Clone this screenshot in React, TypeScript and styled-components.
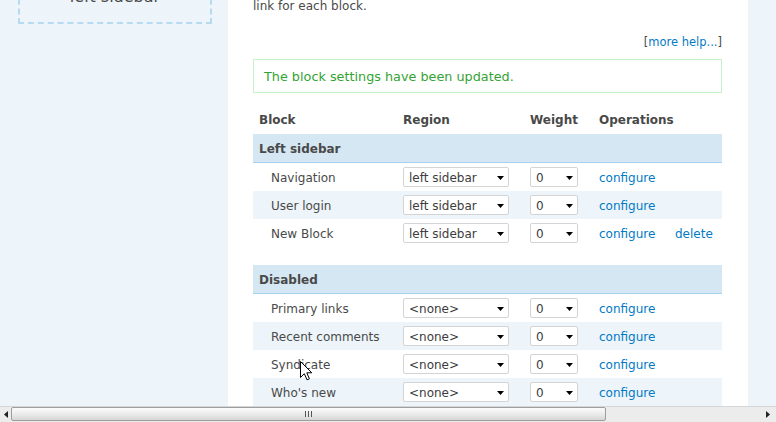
import styled, { createGlobalStyle } from 'styled-components';

const GlobalStyle = createGlobalStyle`
  html, body {
    margin: 0;
    padding: 0;
  }
  body {
    background: #edf5fa;
    font-family: "DejaVu Sans", Verdana, sans-serif;
    font-size: 12px;
    color: #494949;
  }
`;

const Frame = styled.div`
  width: 776px;
  height: 422px;
  display: flex;
  flex-direction: column;
  overflow: hidden;
`;

const Viewport = styled.div`
  position: relative;
  flex: 1;
  display: flex;
  overflow: hidden;
`;

const Sidebar = styled.aside`
  width: 228px;
  flex: none;
  padding: 0 16px 0 18px;
  box-sizing: border-box;
`;

// region placeholder, scrolled mostly out of view
const RegionBox = styled.div`
  margin-top: -30px;
  height: 54px;
  box-sizing: border-box;
  border: 2px dashed #b6daf0;
  padding-top: 15px;
  text-align: center;
  font-size: 16px;
  line-height: 20px;
  color: #494949;
`;

const Main = styled.main`
  width: 520px;
  flex: none;
  background: #fff;
  padding: 0 26px 0 25px;
  box-sizing: border-box;
`;

const Gutter = styled.div`
  flex: 1;
`;

const Intro = styled.p`
  margin: -3px 0 0;
  line-height: 18px;
`;

const MoreHelp = styled.div`
  margin-top: 19px;
  text-align: right;
  font-size: 11.5px;
  line-height: 16px;
`;

const Link = styled.a`
  color: #027ac6;
  text-decoration: none;
`;

const Message = styled.div`
  margin-top: 9px;
  border: 1px solid #c7f2c8;
  color: #33a333;
  padding: 9px 10px 7px;
  font-size: 12.8px;
  line-height: 16px;
`;

const Table = styled.div`
  margin-top: 12px;
`;

const Row = styled.div<{ $shade?: boolean }>`
  display: grid;
  grid-template-columns: 144px 127px 69px 76px 53px;
  align-items: center;
  height: 28px;
  background: ${(p) => (p.$shade ? '#edf5fa' : '#fff')};
`;

const HeadRow = styled(Row)`
  height: 29px;
  font-weight: bold;
`;

const HeadCell = styled.div<{ $span?: number }>`
  padding-left: 6px;
  white-space: nowrap;
  ${(p) => (p.$span ? `grid-column: span ${p.$span};` : '')}
`;

const Cell = styled.div<{ $indent?: boolean }>`
  padding: 2px 0 0 ${(p) => (p.$indent ? 18 : 6)}px;
  white-space: nowrap;
`;

const SelectCell = styled.div`
  padding-left: 6px;
`;

const Band = styled.div`
  height: 29px;
  box-sizing: border-box;
  display: flex;
  align-items: center;
  padding: 2px 0 0 6px;
  background: #d4e7f3;
  border-bottom: 1px solid #a9d2ef;
  font-weight: bold;
`;

const SectionGap = styled.div`
  height: 18px;
`;

const SelectBox = styled.div<{ $width: number }>`
  width: ${(p) => p.$width}px;
  height: 20px;
  box-sizing: border-box;
  border: 1px solid #d4d4d4;
  border-radius: 2px;
  background: #fff;
  display: flex;
  align-items: center;
  justify-content: space-between;
  padding: 1px 4px 0 5px;
  color: #3c3c3c;
`;

const HScroll = styled.div`
  height: 16px;
  flex: none;
  box-sizing: border-box;
  border-top: 1px solid #d6d6d6;
  background: #ececec;
  display: flex;
  align-items: flex-start;
`;

const ArrowButton = styled.div<{ $width: number }>`
  width: ${(p) => p.$width}px;
  height: 15px;
  flex: none;
  display: flex;
  align-items: center;
  justify-content: center;
`;

const Thumb = styled.div`
  width: 595px;
  height: 14px;
  flex: none;
  box-sizing: border-box;
  border: 1px solid #9e9e9e;
  border-radius: 2px;
  background: linear-gradient(#fbfbfb, #ececec 50%, #d6d6d6);
  display: flex;
  align-items: center;
  justify-content: center;
`;

const Track = styled.div`
  flex: 1;
`;

const Cursor = styled.svg`
  position: absolute;
  left: 300px;
  top: 361px;
`;

const Arrow = () => (
  <svg width="7" height="4" viewBox="0 0 7 4">
    <polygon points="0,0 7,0 3.5,4" fill="#000" />
  </svg>
);

type Block = { name: string; deletable?: boolean };
type Section = { title: string; region: string; blocks: Block[] };

const sections: Section[] = [
  {
    title: 'Left sidebar',
    region: 'left sidebar',
    blocks: [{ name: 'Navigation' }, { name: 'User login' }, { name: 'New Block', deletable: true }],
  },
  {
    title: 'Disabled',
    region: '<none>',
    blocks: [{ name: 'Primary links' }, { name: 'Recent comments' }, { name: 'Syndicate' }, { name: "Who's new" }],
  },
];

const App = () => {
  return (
    <>
      <GlobalStyle />
      <Frame>
        <Viewport>
          <Sidebar>
            <RegionBox>left sidebar</RegionBox>
          </Sidebar>
          <Main>
            <Intro>link for each block.</Intro>
            <MoreHelp>
              [<Link href="#">more help...</Link>]
            </MoreHelp>
            <Message>The block settings have been updated.</Message>
            <Table>
              <HeadRow>
                <HeadCell>Block</HeadCell>
                <HeadCell>Region</HeadCell>
                <HeadCell>Weight</HeadCell>
                <HeadCell $span={2}>Operations</HeadCell>
              </HeadRow>
              {sections.map((section, si) => (
                <div key={section.title}>
                  {si > 0 && <SectionGap />}
                  <Band>{section.title}</Band>
                  {section.blocks.map((block, i) => (
                    <Row key={block.name} $shade={i % 2 === 1}>
                      <Cell $indent>{block.name}</Cell>
                      <SelectCell>
                        <SelectBox $width={106}>
                          <span>{section.region}</span>
                          <Arrow />
                        </SelectBox>
                      </SelectCell>
                      <SelectCell>
                        <SelectBox $width={48}>
                          <span>0</span>
                          <Arrow />
                        </SelectBox>
                      </SelectCell>
                      <Cell>
                        <Link href="#">configure</Link>
                      </Cell>
                      <Cell>{block.deletable && <Link href="#">delete</Link>}</Cell>
                    </Row>
                  ))}
                </div>
              ))}
            </Table>
          </Main>
          <Gutter />
          <Cursor width="13" height="20" viewBox="0 0 13 20">
            <path
              d="M0.5 0.5 L0.5 16.5 L4.3 12.7 L7 18.8 L9.4 17.8 L6.8 11.8 L11.8 11.8 Z"
              fill="#fff"
              stroke="#000"
              strokeWidth="1"
              strokeLinejoin="miter"
            />
          </Cursor>
        </Viewport>
        <HScroll>
          <ArrowButton $width={11}>
            <svg width="4" height="7" viewBox="0 0 4 7">
              <polygon points="4,0 4,7 0,3.5" fill="#222" />
            </svg>
          </ArrowButton>
          <Thumb>
            <svg width="7" height="6" viewBox="0 0 7 6">
              <rect x="0" y="0" width="1" height="6" fill="#555" />
              <rect x="3" y="0" width="1" height="6" fill="#555" />
              <rect x="6" y="0" width="1" height="6" fill="#555" />
            </svg>
          </Thumb>
          <Track />
          <ArrowButton $width={16}>
            <svg width="4" height="7" viewBox="0 0 4 7">
              <polygon points="0,0 0,7 4,3.5" fill="#222" />
            </svg>
          </ArrowButton>
        </HScroll>
      </Frame>
    </>
  );
};

export default App;
